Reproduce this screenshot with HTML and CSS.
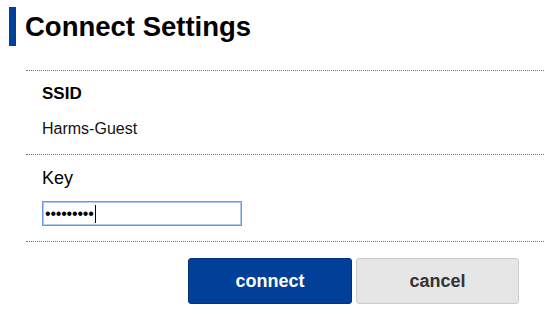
FILE: index.html
```html
<!DOCTYPE html>
<html lang="en">
<head>
<meta charset="utf-8">
<title>Connect Settings</title>
<link rel="stylesheet" href="styles.css">
</head>
<body>
<main class="page">
  <h1 class="title">Connect Settings</h1>
  <form class="form">
    <div class="row">
      <div class="label">SSID</div>
      <div class="value">Harms-Guest</div>
    </div>
    <div class="row row-key">
      <label class="label label-key" for="key">Key</label>
      <div class="field" id="key"><span class="dots">•••••••••</span><span class="caret"></span></div>
    </div>
    <div class="actions">
      <button type="button" class="btn btn-primary">connect</button>
      <button type="button" class="btn btn-secondary">cancel</button>
    </div>
  </form>
</main>
</body>
</html>
```

FILE: styles.css
```css
html, body {
  margin: 0;
  padding: 0;
  background: #fff;
}
body {
  font-family: "Liberation Sans", Arial, sans-serif;
  color: #000;
}
.page {
  padding-top: 7px;
}
.title {
  margin: 0 0 0 9px;
  border-left: 7px solid #004098;
  padding-left: 9px;
  font-size: 27.5px;
  line-height: 39px;
  font-weight: bold;
  color: #000;
}
.form {
  margin: 24px 0 0 26px;
}
.row {
  border-top: 1px dotted #777;
  padding: 13px 0 15px 16px;
}
.row-key {
  padding-top: 12px;
}
.label {
  display: block;
  font-size: 17px;
  line-height: 20px;
  font-weight: bold;
}
.label-key {
  font-size: 18px;
  line-height: 22px;
  font-weight: normal;
}
.value {
  margin-top: 15px;
  font-size: 16px;
  line-height: 20px;
  color: #111;
}
.field {
  margin-top: 12px;
  box-sizing: border-box;
  width: 200px;
  height: 25px;
  border: 1px solid #6d95e6;
  box-shadow: 0 0 0 1px #b3c8f3 inset;
  display: flex;
  align-items: center;
  padding-left: 2px;
}
.dots {
  font-size: 16px;
  letter-spacing: -0.2px;
  color: #000;
  line-height: 1;
}
.caret {
  display: inline-block;
  width: 1px;
  height: 18px;
  background: #000;
  margin-left: 1px;
}
.actions {
  border-top: 1px dotted #777;
  padding: 16px 25px 0 0;
  display: flex;
  justify-content: flex-end;
  gap: 4px;
}
.btn {
  box-sizing: border-box;
  width: 164px;
  height: 46px;
  border-radius: 3px;
  font-family: "Liberation Sans", Arial, sans-serif;
  font-size: 18px;
  font-weight: bold;
  cursor: pointer;
}
.btn-primary {
  background: #004098;
  border: 1px solid #00357e;
  color: #fff;
}
.btn-secondary {
  width: 163px;
  background: #e6e6e6;
  border: 1px solid #cccccc;
  color: #333;
}
```
